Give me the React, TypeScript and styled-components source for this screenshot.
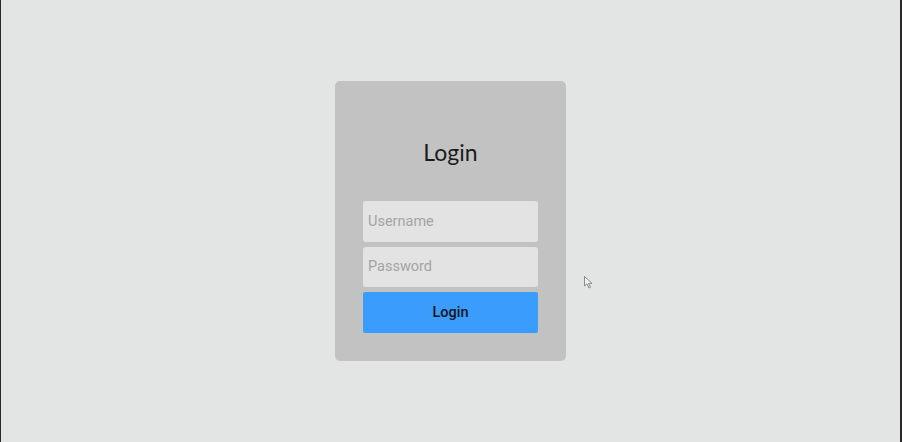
import React, { useState } from 'react';
import styled, { createGlobalStyle } from 'styled-components';

const GlobalStyle = createGlobalStyle`
  html, body {
    margin: 0;
    padding: 0;
  }
  body {
    background: #e3e5e4;
    font-family: Roboto, "Liberation Sans", sans-serif;
  }
`;

const Page = styled.div`
  position: relative;
  box-sizing: border-box;
  height: 442px;
  border-left: 1px solid #2a2a2a;
  border-right: 2px solid #2a2a2a;
  display: flex;
  align-items: center;
  justify-content: center;
`;

const Card = styled.form`
  box-sizing: border-box;
  width: 231px;
  height: 280px;
  padding: 28px;
  background: #c2c2c2;
  border-radius: 5px;
  display: flex;
  flex-direction: column;
  gap: 5px;
`;

const Title = styled.h2`
  margin: 28px 0 29px;
  height: 30px;
  line-height: 30px;
  text-align: center;
  font-family: Lato, Inter, sans-serif;
  font-size: 23px;
  font-weight: 400;
  color: #1c1c1c;
`;

const Field = styled.input`
  box-sizing: border-box;
  width: 100%;
  height: 41px;
  padding: 0 5px;
  border: none;
  border-radius: 3px;
  background: #e3e3e3;
  font-family: Roboto, "Liberation Sans", sans-serif;
  font-size: 14.5px;
  color: #222;
  outline: none;

  &::placeholder {
    color: #a3a3a3;
  }
`;

const SubmitButton = styled.button`
  box-sizing: border-box;
  width: 100%;
  height: 41px;
  border: none;
  border-radius: 2px;
  background: #3a9cfd;
  font-family: Roboto, "Liberation Sans", sans-serif;
  font-size: 14.5px;
  font-weight: 500;
  color: #151515;
  cursor: pointer;
`;

const Pointer = styled.svg`
  position: absolute;
  left: 583px;
  top: 276px;
  pointer-events: none;
`;

const App = () => {
  const [username, setUsername] = useState('');
  const [password, setPassword] = useState('');

  const handleSubmit = (event: React.FormEvent) => {
    event.preventDefault();
  };

  return (
    <>
      <GlobalStyle />
      <Page>
        <Card onSubmit={handleSubmit}>
          <Title>Login</Title>
          <Field
            placeholder="Username"
            value={username}
            onChange={(e) => setUsername(e.target.value)}
          />
          <Field
            type="password"
            placeholder="Password"
            value={password}
            onChange={(e) => setPassword(e.target.value)}
          />
          <SubmitButton type="submit">Login</SubmitButton>
        </Card>
        <Pointer width="9" height="13" viewBox="0 0 9 13">
          <path d="M0.5 0.5 L0.5 10 L3 7.8 L5 12 L6.5 11.3 L4.6 7.3 L8 7.3 Z" fill="#f2f2f2" stroke="#8a8a8a" strokeWidth="1" />
        </Pointer>
      </Page>
    </>
  );
};

export default App;
